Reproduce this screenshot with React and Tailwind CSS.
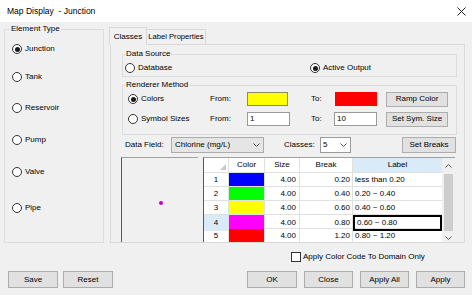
import React from 'react';

const Radio = ({ checked, label, className = '' }) => (
  <div className={`flex items-center gap-[3px] ${className}`}>
    <span className="flex h-[10px] w-[10px] shrink-0 items-center justify-center rounded-full border border-[#333] bg-white">
      {checked && <span className="h-[5px] w-[5px] rounded-full bg-[#1a1a1a]" />}
    </span>
    <span className="leading-[12px]">{label}</span>
  </div>
);

const Btn = ({ children, className = '' }) => (
  <div className={`flex items-center justify-center border border-[#adadad] bg-[#e1e1e1] ${className}`}>
    {children}
  </div>
);

const Chevron = ({ up = false }) => (
  <svg width="7" height="4" viewBox="0 0 7 4">
    <path d={up ? 'M0.5 3.5 L3.5 0.5 L6.5 3.5' : 'M0.5 0.5 L3.5 3.5 L6.5 0.5'} stroke="#555" strokeWidth="1" fill="none" />
  </svg>
);

const rows = [
  { n: 1, color: 'bg-[#0000ff]', brk: '0.20', label: 'less than 0.20' },
  { n: 2, color: 'bg-[#00ff00]', brk: '0.40', label: '0.20 ~ 0.40' },
  { n: 3, color: 'bg-[#ffff00]', brk: '0.60', label: '0.40 ~ 0.60' },
  { n: 4, color: 'bg-[#ff00ff]', brk: '0.80', label: '0.60 ~ 0.80', sel: true },
  { n: 5, color: 'bg-[#ff0000]', brk: '1.20', label: '0.80 ~ 1.20' },
];

export default function App() {
  return (
    <div className="h-[297px] w-[474px] overflow-hidden bg-white font-['Liberation_Sans',Arial,sans-serif] text-[8px] text-black">
      {/* title bar */}
      <div className="flex h-[22px] items-center justify-between pl-[7px] pr-[8px]">
        <span className="whitespace-pre text-[8.5px]">Map Display  - Junction</span>
        <svg width="9" height="9" viewBox="0 0 9 9">
          <path d="M0.5 0.5 L8.5 8.5 M8.5 0.5 L0.5 8.5" stroke="#222" strokeWidth="1" />
        </svg>
      </div>

      <div className="flex h-[273px] w-[472px] flex-col bg-[#f0f0f0]">
        <div className="flex pl-[4px] pt-[1px]">
          {/* Element Type */}
          <fieldset className="h-[220px] w-[100px] border border-[#dcdcdc]">
            <legend className="ml-[5px] px-[1px] leading-[12px]">Element Type</legend>
            <div className="flex flex-col pl-[7px]">
              <Radio checked label="Junction" className="mt-[8px]" />
              <Radio label="Tank" className="mt-[16px]" />
              <Radio label="Reservoir" className="mt-[19px]" />
              <Radio label="Pump" className="mt-[20px]" />
              <Radio label="Valve" className="mt-[20px]" />
              <Radio label="Pipe" className="mt-[24px]" />
            </div>
          </fieldset>

          {/* tab control */}
          <div className="ml-[5px] mt-[4px] flex w-[356px] flex-col">
            <div className="flex items-end">
              <div className="relative z-10 -mb-px flex h-[18px] w-[38px] items-center justify-center whitespace-nowrap border border-b-0 border-[#d9d9d9] bg-[#f0f0f0]">
                Classes
              </div>
              <div className="flex h-[15px] w-[59px] items-center justify-center whitespace-nowrap border border-b-0 border-l-0 border-[#d9d9d9] bg-[#f0f0f0] text-[7.6px]">
                Label Properties
              </div>
            </div>
            <div className="ml-px h-[199px] overflow-hidden border border-[#d9d9d9]">
              {/* Data Source */}
              <fieldset className="ml-[11px] mt-[3px] h-[29px] w-[335px] border border-[#dcdcdc]">
                <legend className="ml-[2px] px-px leading-[12px]">Data Source</legend>
                <div className="mt-[2px] flex items-center pl-[2px]">
                  <Radio label="Database" className="w-[185px]" />
                  <Radio checked label="Active Output" />
                </div>
              </fieldset>

              {/* Renderer Method */}
              <fieldset className="ml-[11px] mt-[2px] h-[56px] w-[335px] border border-[#dcdcdc]">
                <legend className="ml-[2px] px-px leading-[12px]">Renderer Method</legend>
                <div className="mt-[1px] flex h-[14px] items-center pl-[5px]">
                  <Radio checked label="Colors" className="w-[82px]" />
                  <span className="w-[37px]">From:</span>
                  <div className="h-[14px] w-[41px] border border-[#8a8a6a] bg-[#ffff00]" />
                  <span className="ml-[23px] w-[24px]">To:</span>
                  <div className="h-[14px] w-[42px] bg-[#ff0000]" />
                  <Btn className="ml-[9px] h-[15px] w-[62px]">Ramp Color</Btn>
                </div>
                <div className="mt-[6px] flex h-[14px] items-center pl-[5px]">
                  <Radio label="Symbol Sizes" className="w-[82px]" />
                  <span className="w-[37px]">From:</span>
                  <div className="flex h-[14px] w-[43px] items-center border border-[#9a9a9a] bg-white pl-[2px]">1</div>
                  <span className="ml-[21px] w-[23px]">To:</span>
                  <div className="flex h-[14px] w-[43px] items-center border border-[#9a9a9a] bg-white pl-[2px]">10</div>
                  <Btn className="ml-[9px] h-[15px] w-[62px]">Set Sym. Size</Btn>
                </div>
              </fieldset>

              {/* Data field row */}
              <div className="mt-[2px] flex h-[16px] items-center pl-[14px]">
                <span className="w-[46px]">Data Field:</span>
                <div className="flex h-[16px] w-[93px] items-center justify-between border border-[#acacac] bg-[#e5e5e5] pl-[3px] pr-[3px]">
                  <span>Chlorine (mg/L)</span>
                  <Chevron />
                </div>
                <span className="ml-[20px] w-[36px]">Classes:</span>
                <div className="flex h-[16px] w-[31px] items-center justify-between border border-[#9a9a9a] bg-white pl-[2px] pr-[3px]">
                  <span>5</span>
                  <Chevron />
                </div>
                <Btn className="ml-[51px] h-[16px] w-[54px]">Set Breaks</Btn>
              </div>

              {/* preview + grid */}
              <div className="mt-[4px] flex pl-[10px]">
                <div className="flex h-[90px] w-[77px] items-center justify-center border-l border-t border-l-[#5a5a5a] border-t-[#a0a0a0] bg-[#f0f0f0]">
                  <div className="ml-[2px] h-[4px] w-[4px] rounded-full bg-[#c000c0]" />
                </div>
                <div className="ml-[5px] flex w-[252px] border-l border-t border-l-[#5a5a5a] border-t-[#a0a0a0] bg-white">
                  <div className="flex w-[238px] flex-col">
                    <div className="grid h-[15px] grid-cols-[25px_36px_35px_53px_89px] border-b border-[#e0e0e0]">
                      <div className="flex items-end justify-end border-r border-[#e0e0e0] pb-[2px] pr-[2px]">
                        <svg width="6" height="6" viewBox="0 0 6 6">
                          <path d="M6 0 L6 6 L0 6 Z" fill="#c8c8c8" />
                        </svg>
                      </div>
                      <div className="flex items-center justify-center border-r border-[#e0e0e0]">Color</div>
                      <div className="flex items-center justify-center border-r border-[#e0e0e0]">Size</div>
                      <div className="flex items-center justify-center border-r border-[#e0e0e0]">Break</div>
                      <div className="flex items-center justify-center bg-[#d9ebf9]">Label</div>
                    </div>
                    {rows.map((r) => (
                      <div key={r.n} className="grid h-[14px] grid-cols-[25px_36px_35px_53px_89px] border-b border-[#e0e0e0]">
                        <div className={`flex items-center justify-center border-r border-[#e0e0e0] ${r.sel ? 'bg-[#d9ebf9]' : ''}`}>{r.n}</div>
                        <div className={`border-r border-[#e0e0e0] ${r.color}`} />
                        <div className="flex items-center justify-end border-r border-[#e0e0e0] pr-[3px]">4.00</div>
                        <div className="flex items-center justify-end border-r border-[#e0e0e0] pr-[2px]">{r.brk}</div>
                        <div className={`flex items-center pl-[2px] ${r.sel ? 'border-2 border-black pl-0' : ''}`}>{r.label}</div>
                      </div>
                    ))}
                  </div>
                  <div className="flex w-[13px] flex-col bg-[#f0f0f0]">
                    <div className="flex h-[16px] items-center justify-center">
                      <Chevron up />
                    </div>
                    <div className="mx-[2px] h-[57px] bg-[#cdcdcd]" />
                    <div className="flex h-[14px] items-center justify-center">
                      <Chevron />
                    </div>
                  </div>
                </div>
              </div>
            </div>
          </div>
        </div>

        {/* checkbox */}
        <div className="mt-[9px] flex h-[10px] items-center pl-[291px]">
          <div className="h-[10px] w-[10px] border border-[#333] bg-white" />
          <span className="ml-[2px]">Apply Color Code To Domain Only</span>
        </div>

        {/* buttons */}
        <div className="mt-[9px] flex justify-between pl-[8px] pr-[7px]">
          <div className="flex gap-[5px]">
            <Btn className="h-[17px] w-[50px]">Save</Btn>
            <Btn className="h-[17px] w-[50px]">Reset</Btn>
          </div>
          <div className="flex gap-[7px]">
            <Btn className="h-[17px] w-[50px]">OK</Btn>
            <Btn className="h-[17px] w-[49px]">Close</Btn>
            <Btn className="h-[17px] w-[49px]">Apply All</Btn>
            <Btn className="h-[17px] w-[49px]">Apply</Btn>
          </div>
        </div>
      </div>
    </div>
  );
}
